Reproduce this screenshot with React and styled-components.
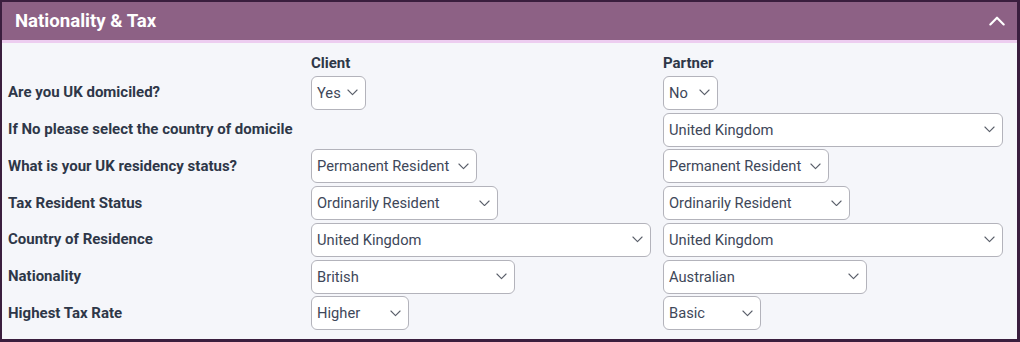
import React from 'react';
import styled, { createGlobalStyle } from 'styled-components';

const GlobalStyle = createGlobalStyle`
  html, body {
    margin: 0;
    padding: 0;
    background: #f5f6fa;
  }
  * {
    box-sizing: border-box;
  }
`;

const color = {
  frame: '#3a1e3e',
  header: '#8d6185',
  stripe: '#edcdf0',
  body: '#f5f6fa',
  label: '#2e3748',
  text: '#3e4759',
  border: '#b3b3bb',
};

const Panel = styled.section`
  width: 1020px;
  height: 342px;
  border-style: solid;
  border-color: ${color.frame};
  border-width: 2px 3px 3px 2px;
  background: ${color.body};
  font-family: Roboto, 'Liberation Sans', sans-serif;
  display: flex;
  flex-direction: column;
`;

const Header = styled.header`
  height: 41px;
  background: ${color.header};
  border-bottom: 3px solid ${color.stripe};
  display: flex;
  align-items: center;
  justify-content: space-between;
  padding: 0 12px 0 13px;
`;

const Title = styled.h2`
  margin: 0;
  color: #fff;
  font-size: 18.6px;
  font-weight: 700;
`;

const CollapseBtn = styled.button`
  border: 0;
  background: none;
  padding: 0;
  display: flex;
  cursor: pointer;
`;

const Form = styled.div`
  display: grid;
  grid-template-columns: 303px 352px 1fr;
  grid-template-rows: 20px;
  grid-auto-rows: 34px;
  row-gap: 2.75px;
  padding: 10px 14px 8px 6px;
`;

const ColHead = styled.div`
  font-size: 15px;
  font-weight: 700;
  color: ${color.label};
  line-height: 20px;
  margin-bottom: 3px;
`;

const Label = styled.div`
  font-size: 15px;
  font-weight: 700;
  color: ${color.label};
  display: flex;
  align-items: center;
  padding-bottom: 1px;
`;

const Cell = styled.div`
  display: flex;
  align-items: stretch;
`;

const SelectBox = styled.div`
  width: ${(props) => props.w}px;
  height: 34px;
  background: #fff;
  border: 1px solid ${color.border};
  border-radius: 6px;
  display: flex;
  align-items: center;
  justify-content: space-between;
  gap: 6px;
  padding: 0 7px 0 5px;
  font-size: 14.7px;
  color: ${color.text};
  white-space: nowrap;
`;

const Chevron = ({ up, size = 11, stroke = '#5a5f6a', width = 1.2 }) => (
  <svg width={size} height={size * 0.6} viewBox="0 0 12 7" fill="none" style={{ flexShrink: 0 }}>
    <path
      d={up ? 'M1 6.2L6 1.2L11 6.2' : 'M1 1L6 6L11 1'}
      stroke={stroke}
      strokeWidth={width}
      strokeLinecap="round"
      strokeLinejoin="round"
    />
  </svg>
);

const Select = ({ value, w }) => (
  <SelectBox w={w}>
    <span>{value}</span>
    <Chevron />
  </SelectBox>
);

const rows = [
  { label: 'Are you UK domiciled?', client: ['Yes', 55], partner: ['No', 55] },
  { label: 'If No please select the country of domicile', client: null, partner: ['United Kingdom', 340] },
  { label: 'What is your UK residency status?', client: ['Permanent Resident', 166], partner: ['Permanent Resident', 166] },
  { label: 'Tax Resident Status', client: ['Ordinarily Resident', 187], partner: ['Ordinarily Resident', 187] },
  { label: 'Country of Residence', client: ['United Kingdom', 340], partner: ['United Kingdom', 340] },
  { label: 'Nationality', client: ['British', 204], partner: ['Australian', 204] },
  { label: 'Highest Tax Rate', client: ['Higher', 98], partner: ['Basic', 98] },
];

export default function App() {
  return (
    <>
      <GlobalStyle />
      <Panel>
        <Header>
          <Title>Nationality &amp; Tax</Title>
          <CollapseBtn aria-label="collapse">
            <Chevron up size={16} stroke="#fff" width={1.6} />
          </CollapseBtn>
        </Header>
        <Form>
          <div />
          <ColHead>Client</ColHead>
          <ColHead>Partner</ColHead>
          {rows.map((r) => (
            <React.Fragment key={r.label}>
              <Label>{r.label}</Label>
              <Cell>{r.client && <Select value={r.client[0]} w={r.client[1]} />}</Cell>
              <Cell>{r.partner && <Select value={r.partner[0]} w={r.partner[1]} />}</Cell>
            </React.Fragment>
          ))}
        </Form>
      </Panel>
    </>
  );
}
